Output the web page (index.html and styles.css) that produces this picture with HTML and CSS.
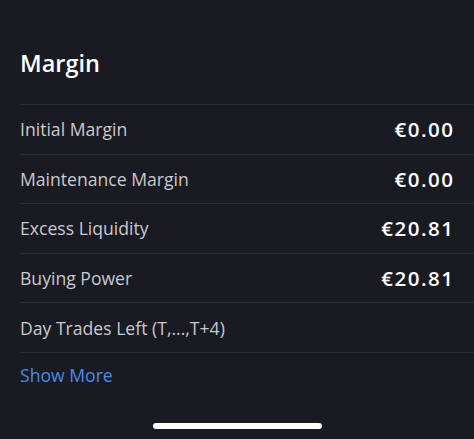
FILE: index.html
```html
<!DOCTYPE html>
<html lang="en">
<head>
  <meta charset="UTF-8">
  <title>Margin</title>
  <link rel="stylesheet" href="styles.css">
</head>
<body>

  <div class="panel">
    <h2 class="title">Margin</h2>

    <div class="row"><span class="label">Initial Margin</span><span class="value">€0.00</span></div>
    <div class="row"><span class="label">Maintenance Margin</span><span class="value">€0.00</span></div>
    <div class="row"><span class="label">Excess Liquidity</span><span class="value">€20.81</span></div>
    <div class="row"><span class="label">Buying Power</span><span class="value">€20.81</span></div>
    <div class="row"><span class="label">Day Trades Left (T,...,T+4)</span><span class="value"></span></div>
    <div class="row more"><span class="link">Show More</span></div>
  </div>

  <div class="home-bar"></div>

</body>
</html>
```

FILE: styles.css
```css
* {
  margin: 0;
  padding: 0;
  box-sizing: border-box;
}

body {
  background: #191a22;
  height: 100vh;
  overflow: hidden;
  position: relative;
  font-family: 'Open Sans', 'Noto Sans', sans-serif;
}

.panel {
  padding-left: 20px;
}

.title {
  height: 104px;
  padding-top: 47px;
  color: #fff;
  font-size: 23.5px;
  font-weight: 600;
  line-height: 32px;
}

.row {
  height: 49.6px;
  border-top: 1px solid #2a2b34;
  display: flex;
  justify-content: space-between;
  align-items: center;
  padding-right: 21px;
}

.label {
  color: #c9c9ce;
  font-size: 17.6px;
}

.value {
  color: #fff;
  font-size: 20.5px;
  font-weight: 600;
  letter-spacing: 1.5px;
  margin-right: -1.5px;
}

.more {
  padding-bottom: 4px;
}

.link {
  color: #4d8ae0;
  font-size: 17.6px;
}

.home-bar {
  position: absolute;
  left: 153px;
  top: 423px;
  width: 169px;
  height: 6px;
  border-radius: 3px;
  background: #fff;
}
```
